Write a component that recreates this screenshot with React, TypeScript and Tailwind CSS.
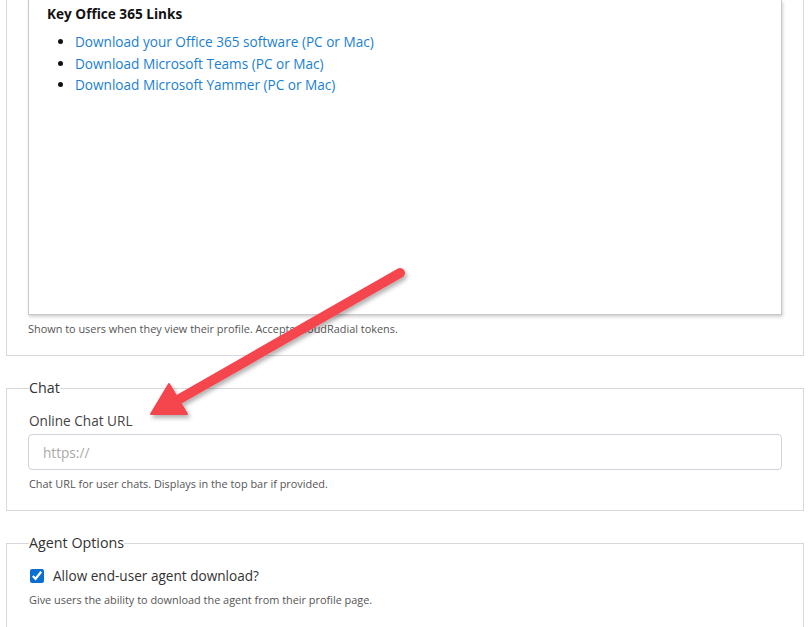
import React from 'react';

const links = [
  'Download your Office 365 software (PC or Mac)',
  'Download Microsoft Teams (PC or Mac)',
  'Download Microsoft Yammer (PC or Mac)',
];

function Arrow() {
  return (
    <svg
      className="pointer-events-none absolute left-0 top-0"
      width="809"
      height="627"
      viewBox="0 0 809 627"
    >
      <defs>
        <filter id="arrow-shadow" x="-20%" y="-20%" width="140%" height="140%">
          <feDropShadow dx="2" dy="3" stdDeviation="2" floodColor="#000" floodOpacity="0.3" />
        </filter>
      </defs>
      <g filter="url(#arrow-shadow)" fill="#f5444d" stroke="#f5444d">
        <line x1="400" y1="273" x2="176" y2="401" strokeWidth="10" strokeLinecap="round" />
        <polygon points="151,414 169,384 187,414" strokeWidth="2" strokeLinejoin="round" />
      </g>
    </svg>
  );
}

export default function App() {
  return (
    <div className="relative min-h-screen bg-white font-['Open_Sans',sans-serif] text-[#333]">
      <div className="flex flex-col gap-[22px] pl-[6px] pr-[5px]">
        {/* Profile message */}
        <div className="border-x border-b border-[#d5d8dd] px-[21px] pb-[18px]">
          <div className="h-[315px] border-x border-b border-[#c9c9c9] pl-[18px] pt-[4px] shadow-[1px_2px_3px_rgba(0,0,0,0.18)]">
            <h4 className="text-[13.6px] leading-5 font-bold text-[#111]">Key Office 365 Links</h4>
            <ul className="mt-[7px] list-disc pl-[28px] text-[13.6px] leading-[21.5px] text-[#1a7fd4] marker:text-[#111]">
              {links.map((l) => (
                <li key={l}>
                  <a href="#" className="hover:underline">{l}</a>
                </li>
              ))}
            </ul>
          </div>
          <p className="mt-[6px] text-[10.9px] leading-4 text-[#555]">
            Shown to users when they view their profile. Accepts CloudRadial tokens.
          </p>
        </div>

        {/* Chat */}
        <fieldset className="border border-[#d5d8dd] px-[21px] pb-[18px]">
          <legend className="ml-px text-[14.3px] leading-5 text-[#333]">Chat</legend>
          <label className="mt-[13px] block pl-px text-[13.6px] leading-5 text-[#444]">Online Chat URL</label>
          <input
            type="text"
            placeholder="https://"
            className="mt-[3px] block h-[36px] w-full rounded-[4px] border border-[#cfd4da] px-[14px] text-[13.6px] text-[#333] outline-none placeholder:text-[#a9a9a9]"
          />
          <p className="mt-[6px] pl-px text-[10.9px] leading-4 text-[#555]">
            Chat URL for user chats. Displays in the top bar if provided.
          </p>
        </fieldset>

        {/* Agent options */}
        <fieldset className="border border-[#d5d8dd] px-[21px] pb-[40px]">
          <legend className="ml-px text-[14.3px] leading-5 text-[#333]">Agent Options</legend>
          <label className="mt-[13px] flex h-5 items-center gap-[9px] pl-[2px] text-[13.6px] text-[#333]">
            <input type="checkbox" defaultChecked className="h-[14px] w-[14px] accent-[#0b6fd1]" />
            Allow end-user agent download?
          </label>
          <p className="mt-[6px] pl-px text-[10.9px] leading-4 text-[#555]">
            Give users the ability to download the agent from their profile page.
          </p>
        </fieldset>
      </div>
      <Arrow />
    </div>
  );
}
